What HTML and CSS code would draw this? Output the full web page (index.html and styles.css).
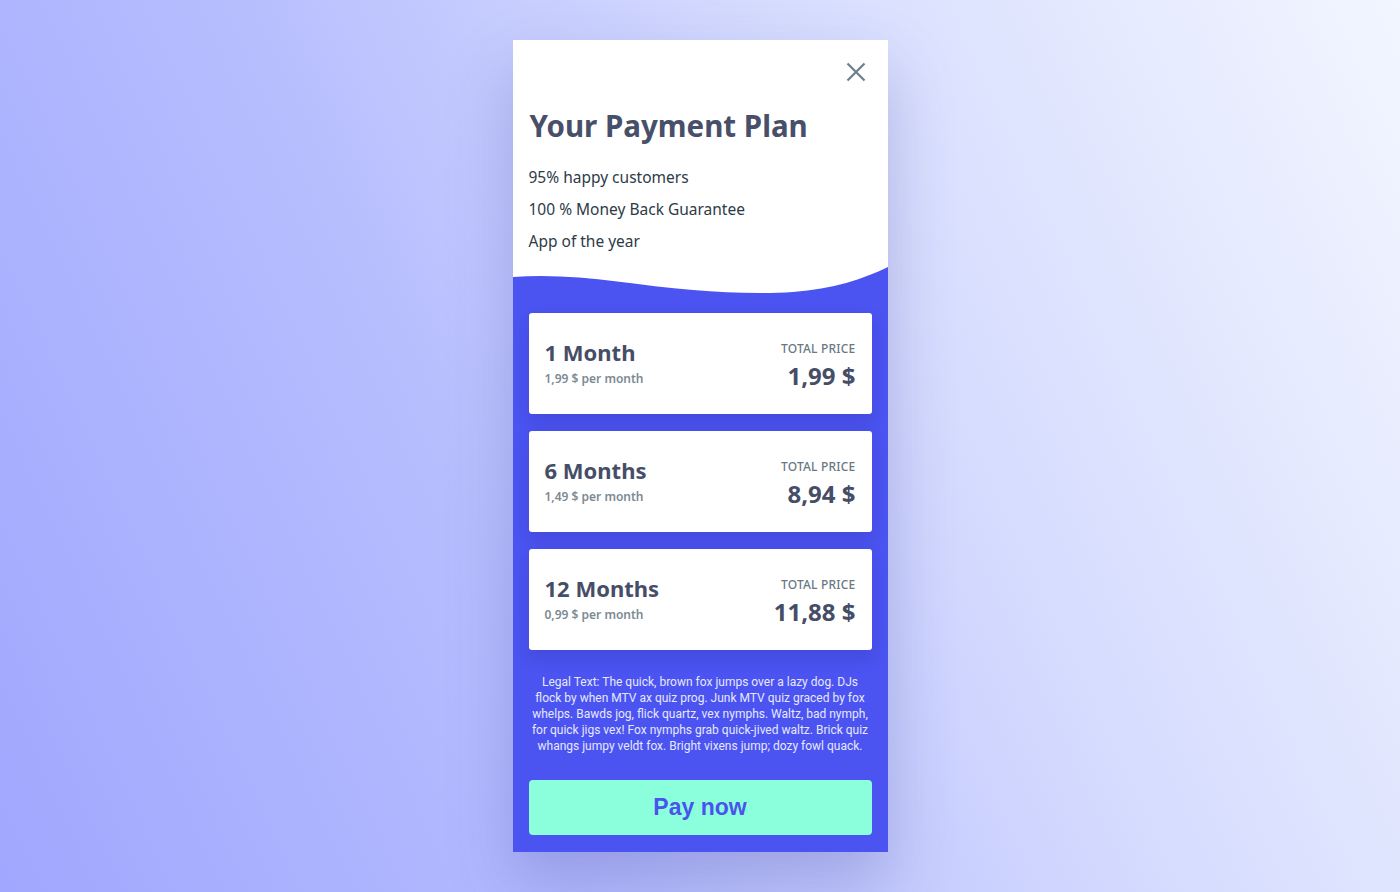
FILE: index.html
```html
<!DOCTYPE html>
<html lang="en">
<head>
<meta charset="utf-8">
<title>Your Payment Plan</title>
<link rel="stylesheet" href="styles.css">
</head>
<body>
<main class="modal">
  <section class="intro">
    <div class="close-row">
      <button class="close" aria-label="Close">
        <svg width="20" height="20" viewBox="0 0 20 20"><path d="M1.5 1.5 L18.5 18.5 M18.5 1.5 L1.5 18.5" stroke="#6b8088" stroke-width="2.2" stroke-linecap="butt" fill="none"/></svg>
      </button>
    </div>
    <h1 class="title">Your Payment Plan</h1>
    <ul class="perks">
      <li>95% happy customers</li>
      <li>100 % Money Back Guarantee</li>
      <li>App of the year</li>
    </ul>
  </section>
  <svg class="wave" viewBox="0 0 375 30" preserveAspectRatio="none"><path d="M0 12 C 60 7, 120 20, 180 25 C 215 28, 250 29, 280 27 C 320 24, 350 14, 375 2 V0 H0 Z" fill="#ffffff"/></svg>
  <section class="plans">
    <div class="plan">
      <div class="plan-info">
        <div class="plan-name">1 Month</div>
        <div class="plan-rate">1,99 $ per month</div>
      </div>
      <div class="plan-total">
        <div class="total-label">TOTAL PRICE</div>
        <div class="total-value">1,99 $</div>
      </div>
    </div>
    <div class="plan">
      <div class="plan-info">
        <div class="plan-name">6 Months</div>
        <div class="plan-rate">1,49 $ per month</div>
      </div>
      <div class="plan-total">
        <div class="total-label">TOTAL PRICE</div>
        <div class="total-value">8,94 $</div>
      </div>
    </div>
    <div class="plan">
      <div class="plan-info">
        <div class="plan-name">12 Months</div>
        <div class="plan-rate">0,99 $ per month</div>
      </div>
      <div class="plan-total">
        <div class="total-label">TOTAL PRICE</div>
        <div class="total-value">11,88 $</div>
      </div>
    </div>
    <p class="legal">Legal Text: The quick, brown fox jumps over a lazy dog. DJs flock by when MTV ax quiz prog. Junk MTV quiz graced by fox whelps. Bawds jog, flick quartz, vex nymphs. Waltz, bad nymph, for quick jigs vex! Fox nymphs grab quick-jived waltz. Brick quiz whangs jumpy veldt fox. Bright vixens jump; dozy fowl quack.</p>
    <button class="pay">Pay now</button>
  </section>
</main>
</body>
</html>
```

FILE: styles.css
```css
* { box-sizing: border-box; }

html, body { height: 100%; }

body {
  margin: 0;
  background: linear-gradient(65deg, #a0a7fe 0%, #b6bdfe 35%, #d6dcfe 65%, #f2f6ff 100%);
  font-family: "Noto Sans", "Open Sans", sans-serif;
  display: flex;
  justify-content: center;
  align-items: flex-start;
  padding-top: 40px;
}

.modal {
  width: 375px;
  height: 812px;
  background: #4b53f0;
  display: flex;
  flex-direction: column;
  box-shadow: 0 30px 60px rgba(70, 72, 160, 0.28);
}

.intro {
  background: #ffffff;
  padding: 0 16px 0 16px;
  height: 226px;
}

.close-row {
  display: flex;
  justify-content: flex-end;
  padding-top: 22px;
  padding-right: 6px;
}

.close {
  border: 0;
  background: none;
  padding: 0;
  width: 20px;
  height: 20px;
  display: block;
  cursor: pointer;
}

.close svg { display: block; }

.title {
  margin: 26px 0 0 1px;
  font-size: 29.5px;
  line-height: 36px;
  font-weight: 700;
  color: #474f69;
}

.perks {
  list-style: none;
  margin: 17px 0 0 0;
  padding: 0;
}

.perks li {
  font-size: 15.5px;
  line-height: 32px;
  color: #2d3b47;
}

.wave {
  display: block;
  width: 375px;
  height: 30px;
  margin-top: -1px;
}

.plans {
  padding: 18px 16px 17px;
  display: flex;
  flex-direction: column;
  flex: 1;
}

.plan {
  background: #ffffff;
  border-radius: 3px;
  height: 101px;
  padding: 0 16px;
  display: flex;
  justify-content: space-between;
  align-items: center;
  box-shadow: 0 8px 16px rgba(40, 40, 140, 0.18);
}

.plan + .plan { margin-top: 17px; }

.plan-name {
  font-size: 22px;
  line-height: 24px;
  font-weight: 700;
  color: #464d67;
}

.plan-rate {
  font-size: 12px;
  line-height: 16px;
  font-weight: 600;
  color: #7c8a94;
  margin-top: 7px;
}

.plan-total {
  text-align: right;
  padding-top: 5px;
}

.total-label {
  font-size: 12px;
  line-height: 16px;
  font-weight: 500;
  color: #6a7884;
  letter-spacing: 0.2px;
}

.total-value {
  font-size: 24px;
  line-height: 30px;
  font-weight: 700;
  color: #464d67;
  margin-top: 4px;
}

.legal {
  margin: 24px 0 0 0;
  font-family: Roboto, "Noto Sans", sans-serif;
  font-size: 12px;
  line-height: 16px;
  color: #e6e8ff;
  text-align: center;
}

.pay {
  margin-top: auto;
  height: 55px;
  border: 0;
  border-radius: 4px;
  background: #8bffdc;
  color: #4a54ec;
  font-family: "Liberation Sans", Arial, sans-serif;
  font-size: 23px;
  font-weight: 700;
  cursor: pointer;
}
```
